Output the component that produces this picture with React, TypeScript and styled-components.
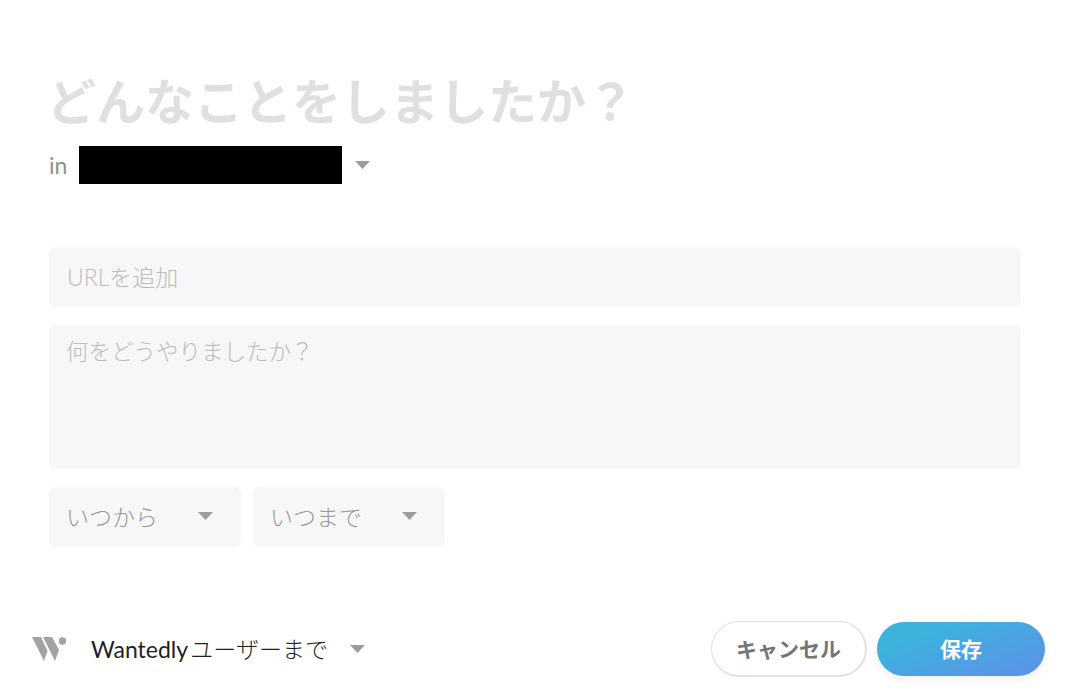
import styled, { createGlobalStyle } from "styled-components";

const GlobalStyle = createGlobalStyle`
  html, body {
    margin: 0;
    padding: 0;
    background: #fff;
  }
  body {
    font-family: Lato, "Noto Sans CJK JP", sans-serif;
  }
`;

function Caret() {
  return (
    <svg width="15" height="8" viewBox="0 0 15 8">
      <path d="M0 0h15L7.5 8z" fill="#9c9c9c" />
    </svg>
  );
}

function WantedlyLogo() {
  return (
    <svg width="35" height="25" viewBox="0 0 35 25">
      <path d="M0 0h9l6.500 14-3.500 10z" fill="#a3a3a3" />
      <path d="M11 0h9l7 13-4 11z" fill="#a3a3a3" />
      <circle cx="30.500" cy="4" r="3.700" fill="#a3a3a3" />
    </svg>
  );
}

export default function App() {
  return (
    <>
      <GlobalStyle />
      <Page>
        <Form>
          <Title>どんなことをしましたか？</Title>
          <CompanyRow>
            <InLabel>in</InLabel>
            <Redacted />
            <Caret />
          </CompanyRow>
          <UrlField>URLを追加</UrlField>
          <DescriptionField>何をどうやりましたか？</DescriptionField>
          <DateRow>
            <DateSelect>
              いつから
              <Caret />
            </DateSelect>
            <DateSelect>
              いつまで
              <Caret />
            </DateSelect>
          </DateRow>
        </Form>
        <Footer>
          <Audience>
            <WantedlyLogo />
            <AudienceLabel>
              <Latin>Wantedly</Latin> ユーザーまで
            </AudienceLabel>
            <Caret />
          </Audience>
          <Actions>
            <CancelButton>キャンセル</CancelButton>
            <SaveButton>保存</SaveButton>
          </Actions>
        </Footer>
      </Page>
    </>
  );
}

const Page = styled.div`
  width: 1071px;
  height: 699px;
  overflow: hidden;
  display: flex;
  flex-direction: column;
`;

const Form = styled.div`
  padding: 71px 50px 0 49px;
  display: flex;
  flex-direction: column;
`;

const Title = styled.h1`
  margin: 0 0 0 -2px;
  font-size: 49px;
  line-height: 60px;
  font-weight: 700;
  color: #e0e0e0;
  white-space: nowrap;
`;

const CompanyRow = styled.div`
  display: flex;
  align-items: center;
  margin-top: 15px;
  height: 38px;
`;

const InLabel = styled.span`
  font-size: 23px;
  color: #8f8f8f;
  width: 30px;
`;

const Latin = styled.span`
  font-weight: 400;
`;

const Redacted = styled.div`
  width: 263px;
  height: 38px;
  background: #000;
  margin-right: 13px;
`;

const UrlField = styled.div`
  margin-top: 63px;
  height: 60px;
  box-sizing: border-box;
  padding: 0 18px 3px;
  display: flex;
  align-items: center;
  background: #f7f7f7;
  border-radius: 6px;
  font-size: 23px;
  font-weight: 300;
  color: #bcbcbc;
`;

const DescriptionField = styled.div`
  margin-top: 18px;
  height: 144px;
  box-sizing: border-box;
  padding: 11px 17px;
  background: #f7f7f7;
  border-radius: 6px;
  font-size: 22.5px;
  font-weight: 300;
  line-height: 32px;
  color: #bcbcbc;
`;

const DateRow = styled.div`
  display: flex;
  gap: 12px;
  margin-top: 18px;
`;

const DateSelect = styled.div`
  width: 192px;
  height: 60px;
  box-sizing: border-box;
  padding: 0 28px 3px 17px;
  display: flex;
  align-items: center;
  justify-content: space-between;
  background: #f7f7f7;
  border-radius: 6px;
  font-size: 23px;
  font-weight: 300;
  color: #999;
`;

const Footer = styled.div`
  margin-top: 74px;
  padding: 0 26px 0 32px;
  display: flex;
  align-items: center;
  justify-content: space-between;
`;

const Audience = styled.div`
  display: flex;
  align-items: center;
`;

const AudienceLabel = styled.span`
  font-size: 23px;
  font-weight: 300;
  color: #1f1f1f;
  margin: 0 22px 2px 24px;
  word-spacing: -4px;
`;

const Actions = styled.div`
  display: flex;
  align-items: center;
  gap: 10px;
`;

const CancelButton = styled.button`
  width: 156px;
  height: 56px;
  padding: 0 0 2px;
  border: 1px solid #e0e0e0;
  border-bottom-width: 2px;
  border-right-width: 2px;
  border-radius: 28px;
  background: #fff;
  font-family: inherit;
  font-size: 21px;
  font-weight: 700;
  color: #757575;
`;

const SaveButton = styled.button`
  width: 168px;
  height: 54px;
  padding: 0 0 2px;
  border: 0;
  border-radius: 27px;
  background: linear-gradient(160deg, #3db2dd 25%, #5796e6 85%);
  box-shadow: 0 4px 10px rgba(0, 0, 0, 0.06);
  font-family: inherit;
  font-size: 21px;
  font-weight: 700;
  color: #fff;
`;
